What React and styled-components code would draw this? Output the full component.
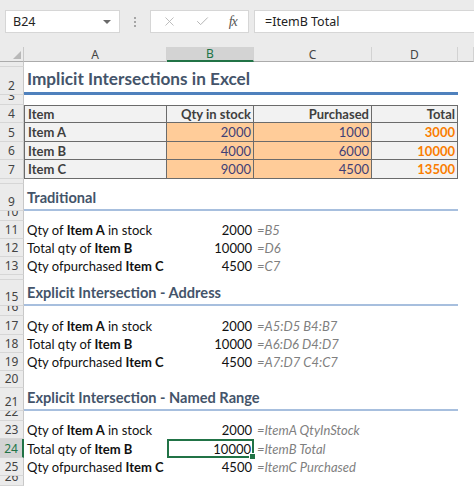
import React from "react";
import styled, { createGlobalStyle, css } from "styled-components";
import { X, Check } from "lucide-react";

const GlobalStyle = createGlobalStyle`
  html, body { margin: 0; padding: 0; background: #fff; }
  body { font-family: Lato, "Liberation Sans", sans-serif; }
`;

const GREEN = "#217346";
const COLS = [24, 143, 87, 118, 86, 16];

const rows = [
  { n: 1, h: 5 },
  { n: 2, h: 28, title: "Implicit Intersections in Excel", level: 1 },
  { n: 3, h: 10 },
  { n: 4, h: 18, table: ["Item", "Qty in stock", "Purchased", "Total"], head: true },
  { n: 5, h: 19, table: ["Item A", "2000", "1000", "3000"] },
  { n: 6, h: 18, table: ["Item B", "4000", "6000", "10000"] },
  { n: 7, h: 19, table: ["Item C", "9000", "4500", "13500"] },
  { n: 8, h: 5 },
  { n: 9, h: 27, title: "Traditional", level: 2 },
  { n: 10, h: 10 },
  { n: 11, h: 18, line: [["Qty of ", "Item A", " in stock"], "2000", "=B5"] },
  { n: 12, h: 18, line: [["Total qty of ", "Item B", ""], "10000", "=D6"] },
  { n: 13, h: 18, line: [["Qty ofpurchased ", "Item C", ""], "4500", "=C7"] },
  { n: 14, h: 5 },
  { n: 15, h: 26, title: "Explicit Intersection - Address", level: 2 },
  { n: 16, h: 10 },
  { n: 17, h: 19, line: [["Qty of ", "Item A", " in stock"], "2000", "=A5:D5 B4:B7"] },
  { n: 18, h: 18, line: [["Total qty of ", "Item B", ""], "10000", "=A6:D6 D4:D7"] },
  { n: 19, h: 18, line: [["Qty ofpurchased ", "Item C", ""], "4500", "=A7:D7 C4:C7"] },
  { n: 20, h: 17 },
  { n: 21, h: 23, title: "Explicit Intersection - Named Range", level: 2 },
  { n: 22, h: 10 },
  { n: 23, h: 18, line: [["Qty of ", "Item A", " in stock"], "2000", "=ItemA QtyInStock"] },
  { n: 24, h: 19, line: [["Total qty of ", "Item B", ""], "10000", "=ItemB Total"], selected: true },
  { n: 25, h: 18, line: [["Qty ofpurchased ", "Item C", ""], "4500", "=ItemC Purchased"] },
  { n: 26, h: 10 },
];

const Page = styled.div`
  width: 474px;
  height: 486px;
  overflow: hidden;
  background: #fff;
`;

const Toolbar = styled.div`
  height: 47px;
  box-sizing: border-box;
  padding: 10px 0 0 5px;
  display: flex;
  align-items: flex-start;
  background: #ebebeb;
  font-family: "Noto Sans", "Open Sans", sans-serif;
  font-size: 12.5px;
  color: #222;
`;

const NameBox = styled.div`
  width: 115px;
  height: 23px;
  box-sizing: border-box;
  border: 1px solid #d6d6d6;
  background: #fff;
  display: flex;
  align-items: center;
  justify-content: space-between;
  padding: 0 8px 0 7px;
`;

const Caret = styled.span`
  width: 0;
  height: 0;
  border-left: 4px solid transparent;
  border-right: 4px solid transparent;
  border-top: 4px solid #6a6a6a;
`;

const Grip = styled.div`
  width: 30px;
  height: 23px;
  display: flex;
  flex-direction: column;
  align-items: center;
  justify-content: center;
  gap: 2px;
  span {
    width: 2px;
    height: 2px;
    background: #a5a5a5;
  }
`;

const FxBox = styled.div`
  width: 99px;
  height: 23px;
  box-sizing: border-box;
  border: 1px solid #d6d6d6;
  background: #fff;
  display: flex;
  align-items: center;
  justify-content: space-around;
  padding: 0 2px;
  color: #b5b5b5;
`;

const Fx = styled.span`
  font-family: "Liberation Serif", serif;
  font-style: italic;
  font-size: 14px;
  color: #555;
  letter-spacing: -1px;
`;

const Formula = styled.div`
  flex: 1;
  height: 23px;
  box-sizing: border-box;
  border: 1px solid #d6d6d6;
  border-right: none;
  margin-left: 5px;
  background: #fff;
  display: flex;
  align-items: center;
  padding-left: 10px;
`;

const Sheet = styled.div`
  display: grid;
  grid-template-columns: ${COLS.map((c) => c + "px").join(" ")};
  grid-template-rows: ${(p) => p.$rows};
  font-size: 13px;
  color: #111;
`;

const Corner = styled.div`
  background: #ebebeb;
  border-right: 1px solid #c8c8c8;
  border-bottom: 1px solid #ababab;
  box-sizing: border-box;
  position: relative;
  &::after {
    content: "";
    position: absolute;
    right: 2px;
    bottom: 2px;
    border-left: 8px solid transparent;
    border-bottom: 8px solid #b8b8b8;
  }
`;

const ColHead = styled.div`
  box-sizing: border-box;
  display: flex;
  align-items: center;
  justify-content: center;
  font-family: "Noto Sans", "Open Sans", sans-serif;
  font-size: 12px;
  color: #444;
  background: #ebebeb;
  border-right: 1px solid #d2d2d2;
  border-bottom: 1px solid #ababab;
  ${(p) =>
    p.$active &&
    css`
      background: #d3d3d3;
      color: ${GREEN};
      border-bottom: 2px solid ${GREEN};
    `}
`;

const RowHead = styled.div`
  box-sizing: border-box;
  overflow: hidden;
  display: flex;
  align-items: flex-end;
  justify-content: center;
  font-family: "Noto Sans", "Open Sans", sans-serif;
  font-size: 12px;
  line-height: 16px;
  color: #444;
  background: #ebebeb;
  border-right: 1px solid #c8c8c8;
  border-bottom: 1px solid #d6d6d6;
  ${(p) =>
    p.$active &&
    css`
      background: #d3d3d3;
      color: ${GREEN};
      border-right: 2px solid ${GREEN};
    `}
`;

const Cell = styled.div`
  box-sizing: border-box;
  position: relative;
  display: flex;
  align-items: center;
  justify-content: ${(p) => (p.$right ? "flex-end" : "flex-start")};
  padding: 0 2px 0 3px;
  white-space: nowrap;
  font-weight: ${(p) => (p.$bold ? 700 : 400)};
  font-style: ${(p) => (p.$italic ? "italic" : "normal")};
  color: ${(p) => p.$color || "#111"};
  background: ${(p) => p.$fill || "transparent"};
  ${(p) =>
    p.$box &&
    css`
      border-right: 1px solid #6b6b6b;
      border-bottom: 1px solid #6b6b6b;
      border-top: ${p.$top ? "1px solid #6b6b6b" : "none"};
      border-left: ${p.$left ? "1px solid #6b6b6b" : "none"};
    `}
  ${(p) =>
    p.$selected &&
    css`
      border: 2px solid ${GREEN};
      padding-right: 1px;
      &::after {
        content: "";
        position: absolute;
        right: -4px;
        bottom: -4px;
        width: 5px;
        height: 5px;
        background: ${GREEN};
        border: 1px solid #fff;
      }
    `}
`;

const Text = styled.span`
  white-space: pre;
`;

const Bold = styled.b`
  font-weight: 700;
`;

const Heading = styled.div`
  grid-column: span 4;
  box-sizing: border-box;
  display: flex;
  align-items: flex-end;
  padding: 0 0 3px 3px;
  font-weight: 700;
  white-space: nowrap;
  color: #44546a;
  font-size: ${(p) => (p.$level === 1 ? "17.2px" : "14.6px")};
  border-bottom: ${(p) => (p.$level === 1 ? "3px solid #4f81bd" : "2px solid #a7bfde")};
`;

const TABLE_STYLES = [
  { $fill: "#f2f2f2", $bold: true, $color: "#3f3f3f" },
  { $fill: "#ffcc99", $color: "#3f3f76", $right: true },
  { $fill: "#ffcc99", $color: "#3f3f76", $right: true },
  { $fill: "#f2f2f2", $bold: true, $color: "#fa7d00", $right: true },
];

function renderRow(r) {
  const cells = [
    <RowHead key="h" $active={r.selected}>
      {r.n}
    </RowHead>,
  ];
  if (r.title) {
    cells.push(
      <Heading key="t" $level={r.level}>
        {r.title}
      </Heading>,
      <Cell key="e" />
    );
  } else if (r.table) {
    r.table.forEach((v, i) => {
      const st = r.head
        ? { $fill: "#f2f2f2", $bold: true, $color: "#3f3f3f", $right: i > 0 }
        : TABLE_STYLES[i];
      cells.push(
        <Cell key={i} $box $top={r.head} $left={i === 0} {...st}>
          {v}
        </Cell>
      );
    });
    cells.push(<Cell key="e" />);
  } else if (r.line) {
    const [[pre, bold, post], value, formula] = r.line;
    cells.push(
      <Cell key="a">
        <Text>
          {pre}
          <Bold>{bold}</Bold>
          {post}
        </Text>
      </Cell>,
      <Cell key="b" $right $selected={r.selected}>
        {value}
      </Cell>,
      <Cell key="c" $italic $color="#7f7f7f">
        {formula}
      </Cell>,
      <Cell key="d" />,
      <Cell key="e" />
    );
  } else {
    for (let i = 0; i < 5; i++) cells.push(<Cell key={i} />);
  }
  return cells;
}

export default function App() {
  const template = ["15px", ...rows.map((r) => r.h + "px")].join(" ");
  return (
    <Page>
      <GlobalStyle />
      <Toolbar>
        <NameBox>
          B24
          <Caret />
        </NameBox>
        <Grip>
          <span />
          <span />
          <span />
        </Grip>
        <FxBox>
          <X size={15} strokeWidth={1.4} />
          <Check size={15} strokeWidth={1.6} />
          <Fx>fx</Fx>
        </FxBox>
        <Formula>=ItemB Total</Formula>
      </Toolbar>
      <Sheet $rows={template}>
        <Corner />
        <ColHead>A</ColHead>
        <ColHead $active>B</ColHead>
        <ColHead>C</ColHead>
        <ColHead>D</ColHead>
        <ColHead />
        {rows.map(renderRow)}
      </Sheet>
    </Page>
  );
}
